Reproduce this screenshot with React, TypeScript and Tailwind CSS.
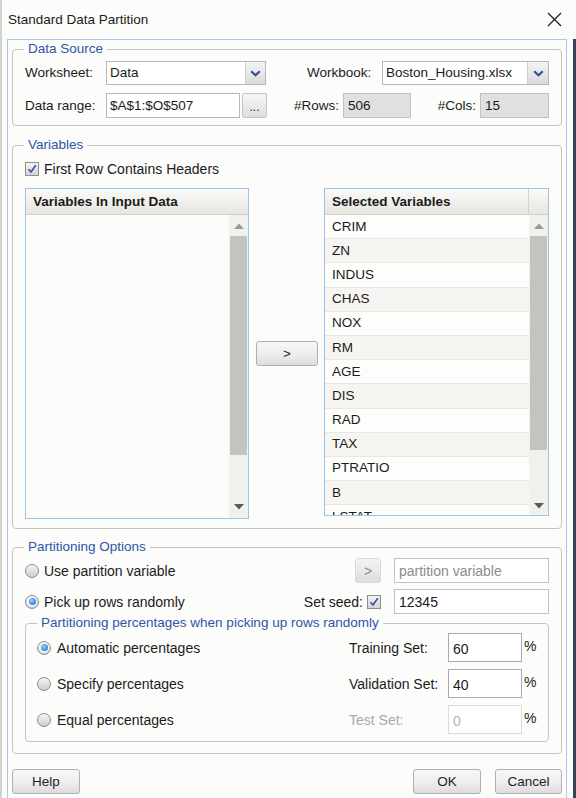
import React from "react";

const Chevron = () => (
  <svg width="11" height="7" viewBox="0 0 11 7">
    <path d="M1.2 1.2 L5.5 5.3 L9.8 1.2" fill="none" stroke="#2d4f9c" strokeWidth="2.2" />
  </svg>
);

const Up = () => (
  <svg width="10" height="6" viewBox="0 0 10 6">
    <path d="M0 6 L5 0.5 L10 6 Z" fill="#9a9a9a" />
  </svg>
);
const Down = () => (
  <svg width="10" height="6" viewBox="0 0 10 6">
    <path d="M0 0 L5 5.5 L10 0 Z" fill="#5a5a5a" />
  </svg>
);

function Select({ w, value, btn }: { w: string; value: string; btn: string }) {
  return (
    <div className={`flex h-[24px] ${w} border border-[#b7b7c4] bg-white`}>
      <div className="flex flex-1 items-center pl-[3px]">{value}</div>
      <div className={`flex ${btn} items-center justify-center border-l border-[#cfcfcf] bg-gradient-to-b from-[#f4f4f4] to-[#dadada]`}>
        <Chevron />
      </div>
    </div>
  );
}

function Radio({ checked }: { checked?: boolean }) {
  return (
    <span className="flex h-[14px] w-[14px] shrink-0 items-center justify-center rounded-full border border-[#8c8c8c] bg-gradient-to-b from-[#f6f6f6] to-[#cdcdcd]">
      {checked && (
        <span className="flex h-[10px] w-[10px] items-center justify-center rounded-full bg-[#f4f4f4]">
          <span className="h-[7px] w-[7px] rounded-full bg-[radial-gradient(circle_at_40%_35%,#8fd0ff,#0b63d6)]" />
        </span>
      )}
    </span>
  );
}

function Check() {
  return (
    <span className="flex h-[14px] w-[14px] shrink-0 items-center justify-center border border-[#8e8e8e] bg-gradient-to-b from-[#f3f3f3] to-[#d4d4d4]">
      <svg width="10" height="10" viewBox="0 0 10 10">
        <path d="M1.5 5.2 L4 8 L8.8 1.2" fill="none" stroke="#3653ad" strokeWidth="1.7" />
      </svg>
    </span>
  );
}

function Btn({ label, cls }: { label: string; cls: string }) {
  return (
    <div className={`flex h-[25px] items-center justify-center rounded-[3px] border border-[#b0b0b0] bg-gradient-to-b from-[#f7f7f7] via-[#efefef] to-[#dcdcdc] text-[#1e1e1e] ${cls}`}>
      {label}
    </div>
  );
}

function Scrollbar({ thumb, track }: { thumb: string; track: string }) {
  return (
    <div className="flex w-[19px] flex-col bg-[#f0f0ed]">
      <div className="flex h-[21px] items-center justify-center">
        <Up />
      </div>
      <div className={`${thumb} mx-[1px] bg-[#c3c3bf]`} />
      <div className={track} />
      <div className="flex flex-1 items-center justify-center">
        <Down />
      </div>
    </div>
  );
}

const vars = ["CRIM", "ZN", "INDUS", "CHAS", "NOX", "RM", "AGE", "DIS", "RAD", "TAX", "PTRATIO", "B", "LSTAT"];

export default function App() {
  return (
    <div className="flex h-[798px] w-[576px] flex-col overflow-hidden border-l-2 border-[#d3d3d3] bg-[#fcfcfa] font-['Liberation_Sans',Arial,sans-serif] text-[13.5px] leading-[16px] text-[#1b1b1b]">
      {/* title bar */}
      <div className="flex h-[39px] shrink-0 items-center justify-between pl-[6px] pr-[14px]">
        <span className="text-[13.5px]">Standard Data Partition</span>
        <svg width="15" height="15" viewBox="0 0 15 15">
          <path d="M1 1 L14 14 M14 1 L1 14" stroke="#222" strokeWidth="1.3" />
        </svg>
      </div>

      <div className="flex flex-1">
        <div className="ml-[5px] flex w-[560px] flex-col border-x border-t border-[#a9c9ec] px-[4px]">
          {/* Data Source */}
          <fieldset className="mt-[1px] h-[85px] rounded-[4px] border border-[#c4c4c4] px-[12px] pt-[4px]">
            <legend className="ml-[-1px] px-[4px] text-[#2f55a8]">Data Source</legend>
            <div className="flex h-[24px] items-center">
              <span className="w-[81px]">Worksheet:</span>
              <Select w="w-[160px]" value="Data" btn="w-[20px]" />
              <span className="ml-[41px] w-[75px]">Workbook:</span>
              <Select w="w-[167px]" value="Boston_Housing.xlsx" btn="w-[21px]" />
            </div>
            <div className="mt-[8px] flex h-[25px] items-center">
              <span className="w-[81px]">Data range:</span>
              <div className="flex h-[25px] w-[134px] items-center border border-[#b7b7c4] bg-white pl-[3px]">$A$1:$O$507</div>
              <div className="ml-[2px] flex h-[25px] w-[25px] items-end justify-center rounded-[2px] border border-[#c4c4c4] bg-gradient-to-b from-[#f6f6f6] to-[#dedede] pb-[5px] text-[12px] leading-[10px]">...</div>
              <span className="w-[76px] pr-[4px] text-right">#Rows:</span>
              <div className="flex h-[25px] w-[68px] items-center border border-[#c0c0cc] bg-[#e0e0de] pl-[4px]">506</div>
              <span className="w-[69px] pr-[4px] text-right">#Cols:</span>
              <div className="flex h-[25px] w-[69px] items-center border border-[#c0c0cc] bg-[#e0e0de] pl-[4px]">15</div>
            </div>
          </fieldset>

          {/* Variables */}
          <fieldset className="mt-[11px] h-[392px] rounded-[4px] border border-[#c4c4c4] px-[12px] pt-[7px]">
            <legend className="ml-[-1px] px-[4px] text-[#2f55a8]">Variables</legend>
            <div className="flex h-[18px] items-center gap-[5px]">
              <Check />
              <span className="text-[14px]">First Row Contains Headers</span>
            </div>
            <div className="mt-[10px] flex">
              {/* left list */}
              <div className="flex h-[331px] w-[224px] flex-col border border-[#9dc2ec] bg-[#fcfcfa]">
                <div className="flex h-[26px] shrink-0 items-center border-b border-[#d4d2ce] bg-gradient-to-b from-[#fbfaf8] to-[#e8e5e0] pl-[7px] font-bold">
                  Variables In Input Data
                </div>
                <div className="flex flex-1 justify-end">
                  <Scrollbar thumb="h-[219px]" track="h-[40px]" />
                </div>
              </div>
              <div className="flex w-[75px] items-center">
                <Btn label=">" cls="ml-[7px] w-[62px] h-[23px]" />
              </div>
              {/* right list */}
              <div className="flex h-[328px] w-[225px] flex-col self-start border border-[#9dc2ec] bg-[#fcfcfa]">
                <div className="flex h-[26px] shrink-0 border-b border-[#d4d2ce] bg-gradient-to-b from-[#fbfaf8] to-[#e8e5e0] font-bold">
                  <div className="flex flex-1 items-center pl-[7px]">Selected Variables</div>
                  <div className="w-[20px] border-l border-[#d4d2ce]" />
                </div>
                <div className="flex flex-1 overflow-hidden">
                  <div className="flex-1 overflow-hidden">
                    {vars.map((v, i) => (
                      <div
                        key={v}
                        className={`flex h-[24.2px] items-center border-b border-[#e9e8e4] pl-[7px] ${i % 2 === 1 ? "bg-[#f6f5f2]" : "bg-[#fdfdfb]"}`}
                      >
                        {v}
                      </div>
                    ))}
                  </div>
                  <Scrollbar thumb="h-[214px]" track="h-[47px]" />
                </div>
              </div>
            </div>
          </fieldset>

          {/* Partitioning Options */}
          <fieldset className="mt-[10px] h-[215px] rounded-[4px] border border-[#c4c4c4] px-[12px] pt-[3px] text-[14px]">
            <legend className="ml-[-1px] px-[4px] text-[13.5px] text-[#2f55a8]">Partitioning Options</legend>
            <div className="flex h-[25px] items-center">
              <Radio />
              <span className="ml-[5px]">Use partition variable</span>
              <div className="ml-auto flex items-center">
                <div className="flex h-[25px] w-[26px] items-center justify-center rounded-[3px] border border-[#d8d8d8] bg-gradient-to-b from-[#f3f3f3] to-[#dedede] text-[#8a8a8a]">&gt;</div>
                <div className="ml-[13px] flex h-[25px] w-[155px] items-center border border-[#c0c0cc] bg-white pl-[4px] text-[#8c8c8c]">partition variable</div>
              </div>
            </div>
            <div className="mt-[6px] flex h-[25px] items-center">
              <Radio checked />
              <span className="ml-[5px]">Pick up rows randomly</span>
              <div className="ml-auto flex items-center">
                <span className="mr-[4px]">Set seed:</span>
                <Check />
                <div className="ml-[13px] flex h-[25px] w-[155px] items-center border border-[#c0c0cc] bg-white pl-[4px]">12345</div>
              </div>
            </div>

            <fieldset className="mt-[1px] h-[127px] rounded-[4px] border border-[#c4c4c4] pl-[11px] pr-[12px] pt-[2px]">
              <legend className="ml-0 px-[4px] text-[13.5px] text-[#2f55a8]">Partitioning percentages when picking up rows randomly</legend>
              <div className="flex h-[29px] items-center">
                <Radio checked />
                <span className="ml-[6px]">Automatic percentages</span>
                <div className="ml-auto flex h-[29px] items-center">
                  <span className="w-[99px]">Training Set:</span>
                  <div className="flex h-[29px] w-[74px] items-center border border-[#a9a9b6] bg-white pl-[4px] pt-[2px]">60</div>
                  <span className="ml-[2px] w-[12px] self-start pt-[5px]">%</span>
                </div>
              </div>
              <div className="mt-[7px] flex h-[29px] items-center">
                <Radio />
                <span className="ml-[6px]">Specify percentages</span>
                <div className="ml-auto flex h-[29px] items-center">
                  <span className="w-[99px]">Validation Set:</span>
                  <div className="flex h-[29px] w-[74px] items-center border border-[#a9a9b6] bg-white pl-[4px] pt-[2px]">40</div>
                  <span className="ml-[2px] w-[12px] self-start pt-[5px]">%</span>
                </div>
              </div>
              <div className="mt-[7px] flex h-[29px] items-center">
                <Radio />
                <span className="ml-[6px]">Equal percentages</span>
                <div className="ml-auto flex h-[29px] items-center">
                  <span className="w-[99px] text-[#a9a9a9]">Test Set:</span>
                  <div className="flex h-[29px] w-[74px] items-center border border-[#dcdcdc] bg-white pl-[4px] pt-[2px] text-[#b3b3b3]">0</div>
                  <span className="ml-[2px] w-[12px] self-start pt-[5px]">%</span>
                </div>
              </div>
            </fieldset>
          </fieldset>

          {/* buttons */}
          <div className="mt-[15px] flex">
            <Btn label="Help" cls="w-[68px]" />
            <Btn label="OK" cls="ml-auto w-[68px]" />
            <Btn label="Cancel" cls="ml-[14px] w-[67px]" />
          </div>
        </div>
        <div className="flex-1" />
        <div className="w-[3px] bg-[#34425c]" />
      </div>
    </div>
  );
}
